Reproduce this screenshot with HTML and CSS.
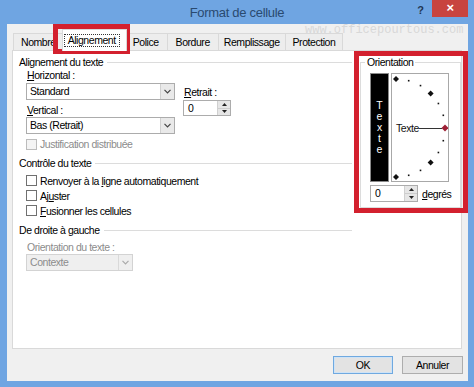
FILE: index.html
```html
<!DOCTYPE html>
<html lang="fr">
<head>
  <meta charset="UTF-8" />
  <title>Format de cellule</title>
  <link rel="stylesheet" href="styles.css">
</head>
<body>

<div id="window">
  <div id="titlebar">
    <div></div>
    <div class="title">Format de cellule</div>
    <div class="caption-btns">
      <span class="help">?</span>
      <span class="close">×</span>
    </div>
  </div>

  <div id="client">
    <div class="tabs">
      <div class="tab">Nombre</div>
      <div class="tab active"><span class="focus">Alignement</span></div>
      <div class="tab roomy">Police</div>
      <div class="tab roomy">Bordure</div>
      <div class="tab tight">Remplissage</div>
      <div class="tab">Protection</div>
    </div>

    <div id="panel">
      <div class="left">
        <div class="group-head first"><span>Alignement du texte</span><i></i></div>
        <div class="indent">
          <div class="label"><u>H</u>orizontal :</div>
          <div class="align-row">
            <div>
              <div class="combo wide">
                <span class="value">Standard</span>
                <span class="arrow"><svg width="7" height="5" viewBox="0 0 7 5"><path d="M0.5 0.8 L3.5 3.8 L6.5 0.8" fill="none" stroke="#444" stroke-width="1.2"/></svg></span>
              </div>
              <div class="label vert"><u>V</u>ertical :</div>
              <div class="combo wide">
                <span class="value">Bas (Retrait)</span>
                <span class="arrow"><svg width="7" height="5" viewBox="0 0 7 5"><path d="M0.5 0.8 L3.5 3.8 L6.5 0.8" fill="none" stroke="#444" stroke-width="1.2"/></svg></span>
              </div>
            </div>
            <div class="retrait">
              <div class="label"><u>R</u>etrait :</div>
              <div class="spin">
                <span class="value">0</span>
                <span class="arrows">
                  <span><svg width="5" height="3" viewBox="0 0 5 3"><path d="M0 3 L2.5 0 L5 3 Z" fill="#222"/></svg></span>
                  <span><svg width="5" height="3" viewBox="0 0 5 3"><path d="M0 0 L2.5 3 L5 0 Z" fill="#222"/></svg></span>
                </span>
              </div>
            </div>
          </div>
          <div class="check single disabled"><span class="box"></span><span>Justification distribuée</span></div>
        </div>

        <div class="group-head ctrl"><span>Contrôle du texte</span><i></i></div>
        <div class="indent checks">
          <div class="check"><span class="box"></span><span>Renvoyer à la <u>l</u>igne automatiquement</span></div>
          <div class="check"><span class="box"></span><span>Aj<u>u</u>ster</span></div>
          <div class="check"><span class="box"></span><span><u>F</u>usionner les cellules</span></div>
        </div>

        <div class="group-head rtl"><span>De droite à gauche</span><i></i></div>
        <div class="indent">
          <div class="label disabled dir">Orientation du texte :</div>
          <div class="combo narrow off">
            <span class="value">Contexte</span>
            <span class="arrow"><svg width="7" height="5" viewBox="0 0 7 5"><path d="M0.5 0.8 L3.5 3.8 L6.5 0.8" fill="none" stroke="#aaa" stroke-width="1.2"/></svg></span>
          </div>
        </div>
      </div>

      <fieldset class="orient">
        <legend>Orientation</legend>
        <div class="orient-body">
          <div class="vtext"><span>T</span><span>e</span><span>x</span><span>t</span><span>e</span></div>
          <div class="dial">
            <svg width="56" height="107" viewBox="0 0 56 107">
              <polygon points="4,2 7,5 4,8 1,5" fill="#111"/>
              <rect x="15.9" y="5.9" width="1.6" height="1.6" fill="#111"/>
              <rect x="27.7" y="10.8" width="1.6" height="1.6" fill="#111"/>
              <polygon points="38.6,16.4 41.6,19.4 38.6,22.4 35.6,19.4" fill="#111"/>
              <rect x="45.6" y="28.7" width="1.6" height="1.6" fill="#111"/>
              <rect x="50.5" y="40.5" width="1.6" height="1.6" fill="#111"/>
              <text x="4" y="58" font-family="Liberation Sans, Arial, sans-serif" font-size="10.5" letter-spacing="-0.45" fill="#111">Texte</text>
              <line x1="27" y1="54.5" x2="50" y2="54.5" stroke="#333" stroke-width="1"/>
              <polygon points="53,50.5 56.5,54 53,57.5 49.5,54" fill="#9e2035"/>
              <rect x="50.5" y="65.9" width="1.6" height="1.6" fill="#111"/>
              <rect x="45.6" y="77.7" width="1.6" height="1.6" fill="#111"/>
              <polygon points="38.6,85.6 41.6,88.6 38.6,91.6 35.6,88.6" fill="#111"/>
              <rect x="27.7" y="95.6" width="1.6" height="1.6" fill="#111"/>
              <rect x="15.9" y="100.5" width="1.6" height="1.6" fill="#111"/>
              <polygon points="4,100 7,103 4,106 1,103" fill="#111"/>
            </svg>
          </div>
        </div>
        <div class="deg-row">
          <div class="spin">
            <span class="value">0</span>
            <span class="arrows">
              <span><svg width="5" height="3" viewBox="0 0 5 3"><path d="M0 3 L2.5 0 L5 3 Z" fill="#222"/></svg></span>
              <span><svg width="5" height="3" viewBox="0 0 5 3"><path d="M0 0 L2.5 3 L5 0 Z" fill="#222"/></svg></span>
            </span>
          </div>
          <span><u>d</u>egrés</span>
        </div>
      </fieldset>
    </div>

    <div class="buttons">
      <div class="btn default">OK</div>
      <div class="btn">Annuler</div>
    </div>
  </div>

  <div class="watermark">www.officepourtous.com</div>
  <div class="mark mark-tab"></div>
  <div class="mark mark-orient"></div>
</div>

</body>
</html>
```

FILE: styles.css
```css
body {
  margin: 0;
  background-color: #6fa5e2;
  font-family: "Liberation Sans", Arial, sans-serif;
  font-size: 10.5px;
  letter-spacing: -0.45px;
  color: #000;
}

#window {
  position: relative;
  width: 474px;
  height: 387px;
}

/* title bar */
#titlebar {
  height: 24px;
  display: grid;
  grid-template-columns: 1fr auto 1fr;
  align-items: start;
}

.title {
  font-size: 13px;
  letter-spacing: -0.3px;
  line-height: 25px;
  color: #2a4a70;
}

.caption-btns {
  display: flex;
  justify-content: flex-end;
  padding-right: 6px;
}

.help {
  font-weight: bold;
  font-size: 11px;
  letter-spacing: 0;
  line-height: 21px;
  color: #1f3553;
  margin-right: 8px;
}

.close {
  width: 36px;
  height: 17px;
  background-color: #c8443f;
  color: #fff;
  text-align: center;
  font-size: 13px;
  font-weight: bold;
  line-height: 16px;
}

/* dialog body */
#client {
  margin: 0 6px 0 7px;
  height: 357px;
  padding: 0 5px;
  box-sizing: border-box;
  background-color: #f0f0f0;
}

.tabs {
  display: flex;
  align-items: flex-end;
  height: 26px;
  padding-left: 2px;
}

.tab {
  height: 17px;
  line-height: 16px;
  padding: 0 7px;
  margin-left: -1px;
  border: 1px solid #d9d9d9;
  border-bottom: none;
  box-sizing: border-box;
  background-color: #ededed;
  white-space: nowrap;
}

.tab.roomy { padding: 0 8px; }
.tab.tight { padding: 0 5px; }

.tab.active {
  position: relative;
  z-index: 1;
  height: 22px;
  padding: 5px 7px 0 2px;
  margin: 0 -2px -1px -2px;
  background-color: #fff;
  line-height: 11px;
}

.focus {
  display: inline-block;
  padding: 0 3px;
  outline: 1px dotted #333;
}

#panel {
  width: 450px;
  height: 299px;
  box-sizing: border-box;
  display: flex;
  gap: 8px;
  padding-left: 6px;
  background-color: #fff;
  border: 1px solid #d9d9d9;
}

.left {
  flex-grow: 1;
}

.group-head {
  display: flex;
  align-items: center;
  gap: 4px;
  height: 13px;
  line-height: 13px;
}

.group-head i {
  flex-grow: 1;
  border-top: 1px solid #dcdcdc;
}

.group-head.first { margin-top: 5px; }
.group-head.ctrl { margin-top: 7px; }
.group-head.rtl { margin-top: 6px; }

.indent {
  padding-left: 7px;
}

.label {
  line-height: 13px;
  padding-left: 1px;
}

.label.vert { margin-top: 4px; }
.label.dir { margin-top: 4px; }

.align-row {
  display: flex;
  gap: 8px;
  margin-top: 1px;
}

.retrait {
  padding-top: 3px;
}

.retrait .spin {
  margin-top: 1px;
}

/* combo boxes */
.combo {
  display: flex;
  height: 17px;
  box-sizing: border-box;
  border: 1px solid #acacac;
  background-color: #fff;
}

.combo .value {
  flex-grow: 1;
  padding-left: 3px;
  line-height: 15px;
}

.combo .arrow {
  width: 13px;
  display: flex;
  align-items: center;
  justify-content: center;
  background-color: #e9e9e9;
  border-left: 1px solid #d0d0d0;
}

.combo.wide { width: 149px; }
.combo.narrow { width: 107px; }

.combo.off {
  border-color: #d3d3d3;
  background-color: #efefef;
  color: #8c8c8c;
}

.combo.off .arrow {
  background-color: #efefef;
  border-left-color: #d9d9d9;
}

/* spin boxes */
.spin {
  display: flex;
  width: 48px;
  height: 16px;
  box-sizing: border-box;
  border: 1px solid #acacac;
  background-color: #fff;
}

.spin .value {
  flex-grow: 1;
  padding-left: 4px;
  line-height: 14px;
}

.spin .arrows {
  width: 12px;
  display: flex;
  flex-direction: column;
  background-color: #e6e6e6;
  border-left: 1px solid #d0d0d0;
}

.spin .arrows span {
  flex-grow: 1;
  display: flex;
  align-items: center;
  justify-content: center;
}

.spin .arrows span:first-child {
  border-bottom: 1px solid #cdcdcd;
}

/* check boxes */
.check {
  display: flex;
  align-items: center;
  height: 15px;
}

.check.single {
  height: 12px;
  margin-top: 4px;
}

.checks {
  margin-top: 3px;
}

.box {
  width: 11px;
  height: 11px;
  box-sizing: border-box;
  margin-right: 3px;
  border: 1px solid #707070;
  background-color: #fff;
}

.disabled { color: #8c8c8c; }

.disabled .box {
  border-color: #bcbcbc;
  background-color: #f4f4f4;
}

/* orientation */
.orient {
  width: 101px;
  height: 152px;
  box-sizing: border-box;
  min-width: 0;
  margin: 5px 0 0 0;
  padding: 0 0 0 9px;
  border: 1px solid #dcdcdc;
}

.orient legend {
  padding: 0 2px;
  margin-left: -5px;
  line-height: 13px;
}

.orient-body {
  display: flex;
  gap: 2px;
  margin-top: 4px;
}

.vtext {
  width: 19px;
  height: 109px;
  box-sizing: border-box;
  display: flex;
  flex-direction: column;
  align-items: center;
  justify-content: center;
  background-color: #000;
  border: 1px solid #8a8a8a;
  color: #fff;
  line-height: 11px;
  letter-spacing: 0;
}

.dial {
  width: 58px;
  height: 109px;
  box-sizing: border-box;
  border: 1px solid #a8a8a8;
  background-color: #fff;
}

.dial svg { display: block; }

.deg-row {
  display: flex;
  align-items: center;
  gap: 4px;
  margin-top: 3px;
}

.deg-row .spin { height: 17px; }
.deg-row .spin .value { line-height: 15px; }

/* buttons */
.buttons {
  display: flex;
  justify-content: flex-end;
  gap: 9px;
  margin-top: 7px;
}

.btn {
  width: 61px;
  height: 18px;
  box-sizing: border-box;
  border: 1px solid #adadad;
  background-color: #e3e3e3;
  text-align: center;
  line-height: 16px;
}

.btn.default {
  width: 60px;
  border-color: #6fa9e0;
  box-shadow: inset 0 0 0 1px #cfe3f6;
}

/* overlays */
.watermark {
  position: absolute;
  left: 305px;
  top: 24px;
  font-family: "Liberation Mono", monospace;
  font-size: 12px;
  letter-spacing: 0;
  line-height: 12px;
  color: #d8d8d8;
}

.mark {
  position: absolute;
  box-sizing: border-box;
  border: 5px solid #d3202e;
}

.mark-tab {
  left: 53px;
  top: 24px;
  width: 77px;
  height: 30px;
}

.mark-orient {
  left: 354px;
  top: 51px;
  width: 114px;
  height: 162px;
}
```
